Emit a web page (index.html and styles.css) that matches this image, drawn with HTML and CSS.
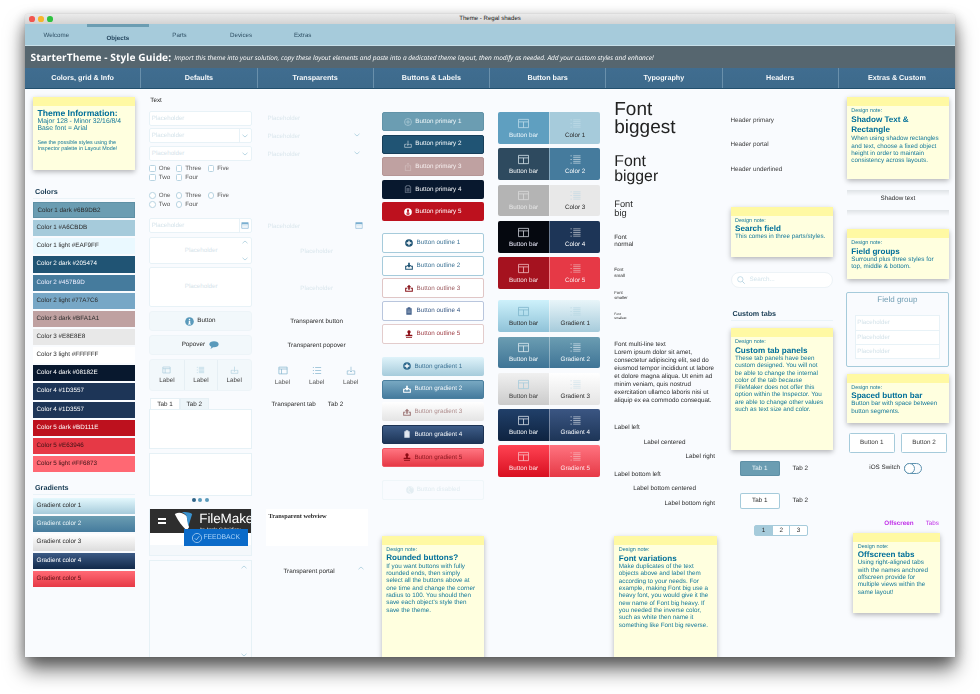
FILE: index.html
```html
<!DOCTYPE html>
<html lang="en">
<head>
<meta charset="utf-8">
<title>Theme - Regal shades</title>
<link rel="stylesheet" href="styles.css">
</head>
<body>
<svg class="sprite" xmlns="http://www.w3.org/2000/svg">
  <symbol id="i-plus-o" viewBox="0 0 24 24"><circle cx="12" cy="12" r="10.5" fill="none" stroke="currentColor" stroke-width="1.6"/><path d="M12 5v14M5 12h14" fill="none" stroke="currentColor" stroke-width="1.6"/></symbol>
  <symbol id="i-plus" viewBox="0 0 24 24"><circle cx="12" cy="12" r="11.5" fill="currentColor"/><path d="M12 5v14M5 12h14" fill="none" stroke="#fff" stroke-width="4"/></symbol>
  <symbol id="i-down-o" viewBox="0 0 24 24"><path d="M7 13H2v9h20v-9h-5M12 2v14M8 12l4 4 4-4" fill="none" stroke="currentColor" stroke-width="1.6"/></symbol>
  <symbol id="i-down" viewBox="0 0 24 24"><path d="M7 13H2v9h20v-9h-5" fill="none" stroke="currentColor" stroke-width="3.2"/><path d="M9.5 2h5v7H19l-7 8-7-8h4.500z" fill="currentColor"/></symbol>
  <symbol id="i-box-up" viewBox="0 0 24 24"><path d="M8 8H4v15h16V8h-4M12 1v13M9 4l3-3 3 3" fill="none" stroke="currentColor" stroke-width="1.6"/></symbol>
  <symbol id="i-up" viewBox="0 0 24 24"><path d="M7 13H2v9h20v-9h-5" fill="none" stroke="currentColor" stroke-width="3.2"/><path d="M9.500 17h5v-7H19l-7-8-7 8h4.500z" fill="currentColor"/></symbol>
  <symbol id="i-trash" viewBox="0 0 24 24"><path d="M7 2h10v3h3v18H4V5h3zM9 9v11M12 9v11M15 9v11" fill="none" stroke="currentColor" stroke-width="1.8"/></symbol>
  <symbol id="i-clip" viewBox="0 0 24 24"><path d="M8 1h8v3h4v19H4V4h4z" fill="currentColor"/><path d="M7 9h10M7 13h10M7 17h10" stroke="#fff" stroke-width="1.400" opacity=".7"/></symbol>
  <symbol id="i-stamp" viewBox="0 0 24 24"><path d="M12 1a5 5 0 0 1 3 9c-1 1-1 3 0 4h6a1 1 0 0 1 1 1v4H2v-4a1 1 0 0 1 1-1h6c1-1 1-3 0-4a5 5 0 0 1 3-9zM3 21h18v2H3z" fill="currentColor"/></symbol>
  <symbol id="i-stamp-c" viewBox="0 0 24 24"><circle cx="12" cy="12" r="11.500" fill="currentColor"/><path d="M12 4a4 4 0 0 1 2 7c-.5 1-.5 2 0 3h3v3H7v-3h3c.5-1 .5-2 0-3a4 4 0 0 1 2-7zM8 18h8v2H8z" fill="#bd111e"/></symbol>
  <symbol id="i-globe" viewBox="0 0 24 24"><circle cx="12" cy="12" r="11.500" fill="currentColor"/><path d="M6 4c4 2 5 5 2 7s0 6 3 7 3 3 2 5M15 2c-1 3 2 4 5 4" fill="none" stroke="#fff" stroke-width="1.800"/></symbol>
  <symbol id="i-table" viewBox="0 0 24 24"><path d="M1 3h22v18H1zM1 8.500h22M12 8.500V21" fill="none" stroke="currentColor" stroke-width="1.800"/></symbol>
  <symbol id="i-window" viewBox="0 0 24 24"><path d="M1 3h22v18H1zM1 8h22M8 8v13" fill="none" stroke="currentColor" stroke-width="1.800"/></symbol>
  <symbol id="i-list" viewBox="0 0 24 24"><path d="M7 4h16M7 12h16M7 20h16M1 4h3M1 12h3M1 20h3M7 8h16M7 16h16" fill="none" stroke="currentColor" stroke-width="1.500"/></symbol>
  <symbol id="i-list3" viewBox="0 0 24 24"><path d="M7 4h16M7 12h16M7 20h16M1 4h3M1 12h3M1 20h3" fill="none" stroke="currentColor" stroke-width="1.800"/></symbol>
  <symbol id="i-info" viewBox="0 0 24 24"><circle cx="12" cy="12" r="11.500" fill="currentColor"/><circle cx="12" cy="6.500" r="2" fill="#fff"/><path d="M10 10h4v8h2v2H8v-2h2z" fill="#fff"/></symbol>
  <symbol id="i-chat" viewBox="0 0 30 24"><path d="M15 1c8 0 14 4 14 9s-6 9-14 9c-1 0-2 0-3-.2C10 21 7 23 4 23c2-2 3-4 3-6-4-1.500-6-4-6-7 0-5 6-9 14-9z" fill="currentColor"/></symbol>
  <symbol id="i-chev-up" viewBox="0 0 12 8"><path d="M1 6.500 6 2l5 4.500" fill="none" stroke="currentColor" stroke-width="1.500"/></symbol>
  <symbol id="i-chev-down" viewBox="0 0 12 8"><path d="M1 1.500 6 6l5-4.500" fill="none" stroke="currentColor" stroke-width="1.500"/></symbol>
  <symbol id="i-cal" viewBox="0 0 24 24"><path d="M1 2h22v20H1z" fill="#fff" stroke="currentColor" stroke-width="2"/><path d="M1 2h22v6H1z" fill="currentColor"/><path d="M4 12h16M4 17h16" stroke="currentColor" stroke-width="1.500" opacity=".5"/></symbol>
  <symbol id="i-search" viewBox="0 0 24 24"><circle cx="10" cy="10" r="8" fill="none" stroke="currentColor" stroke-width="1.800"/><path d="m16 16 7 7" stroke="currentColor" stroke-width="2.400"/></symbol>
  <symbol id="i-check" viewBox="0 0 24 24"><circle cx="12" cy="12" r="11" fill="none" stroke="currentColor" stroke-width="1.500"/><path d="m6.500 12.500 4 4 7-9" fill="none" stroke="currentColor" stroke-width="1.500"/></symbol>
  <symbol id="i-fm" viewBox="0 0 24 24"><path d="M1 3c6-3 11-1 15 3l3 14-3 4C11 19 5 12 1 3z" fill="#fff"/><path d="M10 1c5-1 9 0 13 2l-5 16-2-13C15 4 13 2 10 1z" fill="#3a93d0"/></symbol>
</svg>

<div class="window">
  <div class="titlebar">
    <div class="lights"><span class="light red"></span><span class="light amber"></span><span class="light green"></span></div>
    <span class="title">Theme - Regal shades</span>
  </div>

  <nav class="topnav">
    <a>Welcome</a><a class="active">Objects</a><a>Parts</a><a>Devices</a><a>Extras</a>
  </nav>

  <header class="guide">
    <strong>StarterTheme - Style Guide:</strong>
    <em>Import this theme into your solution, copy these layout elements and paste into a dedicated theme layout, then modify as needed. Add your custom styles and enhance!</em>
  </header>

  <div class="colheads">
    <div>Colors, grid &amp; Info</div><div>Defaults</div><div>Transparents</div><div>Buttons &amp; Labels</div><div>Button bars</div><div>Typography</div><div>Headers</div><div>Extras &amp; Custom</div>
  </div>

  <main class="cols">
    <!-- Column 1 -->
    <section class="col">
      <div class="note note-theme">
        <h3 class="big">Theme Information:</h3>
        <p>Major 128 - Minor 32/16/8/4<br>Base font = Arial</p>
        <p class="gap">See the possible styles using the<br>Inspector palette in Layout Mode!</p>
      </div>
      <h4 class="sect colors-title">Colors</h4>
      <ul class="swatches">
        <li class="s1d">Color 1 dark #6B9DB2</li>
        <li class="s1">Color 1 #A6CBDB</li>
        <li class="s1l">Color 1 light #EAF9FF</li>
        <li class="s2d">Color 2 dark #205474</li>
        <li class="s2">Color 2 #457B9D</li>
        <li class="s2l">Color 2 light #77A7C6</li>
        <li class="s3d">Color 3 dark #BFA1A1</li>
        <li class="s3">Color 3 #E8E8E8</li>
        <li class="s3l">Color 3 light #FFFFFF</li>
        <li class="s4d">Color 4 dark #08182E</li>
        <li class="s4">Color 4 #1D3557</li>
        <li class="s4">Color 4 #1D3557</li>
        <li class="s5d">Color 5 dark #BD111E</li>
        <li class="s5">Color 5 #E63946</li>
        <li class="s5l">Color 5 light #FF6873</li>
      </ul>
      <h4 class="sect gradients-title">Gradients</h4>
      <ul class="swatches">
        <li class="g1">Gradient color 1</li>
        <li class="g2">Gradient color 2</li>
        <li class="g3">Gradient color 3</li>
        <li class="g4">Gradient color 4</li>
        <li class="g5">Gradient color 5</li>
      </ul>
    </section>

    <!-- Column 2 -->
    <section class="col">
      <div class="text-label">Text</div>
      <div class="field first">Placeholder</div>
      <div class="field drop">Placeholder<span class="cell"><svg class="chev"><use href="#i-chev-down"/></svg></span></div>
      <div class="field drop plain">Placeholder<span class="cell"><svg class="chev"><use href="#i-chev-down"/></svg></span></div>
      <div class="choices checks">
        <label><i></i>One</label><label><i></i>Three</label><label><i></i>Five</label>
        <label><i></i>Two</label><label><i></i>Four</label>
      </div>
      <div class="choices radios">
        <label><i></i>One</label><label><i></i>Three</label><label><i></i>Five</label>
        <label><i></i>Two</label><label><i></i>Four</label>
      </div>
      <div class="field drop date">Placeholder<span class="cell"><svg class="cal"><use href="#i-cal"/></svg></span></div>
      <div class="field scroll">Placeholder<span class="updown"><svg class="chev"><use href="#i-chev-up"/></svg><svg class="chev"><use href="#i-chev-down"/></svg></span></div>
      <div class="field area">Placeholder</div>
      <div class="soft first-soft"><svg class="ic-info"><use href="#i-info"/></svg>Button</div>
      <div class="soft second-soft">Popover<svg class="ic-chat"><use href="#i-chat"/></svg></div>
      <div class="softbar">
        <div><svg class="ic"><use href="#i-window"/></svg>Label</div>
        <div><svg class="ic"><use href="#i-list"/></svg>Label</div>
        <div><svg class="ic"><use href="#i-down-o"/></svg>Label</div>
      </div>
      <div class="tabset">
        <span class="tab on">Tab 1</span><span class="tab">Tab 2</span>
      </div>
      <div class="panel tab-panel"></div>
      <div class="panel slide-panel"></div>
      <div class="dots"><i class="dark"></i><i></i><i></i></div>
      <div class="webview">
        <div class="fm-banner">
          <span class="burger"></span>
          <svg class="fm-logo"><use href="#i-fm"/></svg>
          <span class="fm-name">FileMaker<small>An Apple Subsidiary</small></span>
        </div>
        <div class="feedback"><svg><use href="#i-check"/></svg>FEEDBACK</div>
        <div class="wv-white"></div>
      </div>
      <div class="portal">
        <svg class="chev"><use href="#i-chev-up"/></svg>
        <svg class="chev"><use href="#i-chev-down"/></svg>
      </div>
    </section>

    <!-- Column 3 -->
    <section class="col col-clear">
      <div class="clear c-first">Placeholder</div>
      <div class="clear c-drop">Placeholder<svg class="chev"><use href="#i-chev-down"/></svg></div>
      <div class="clear c-drop">Placeholder<svg class="chev"><use href="#i-chev-down"/></svg></div>
      <div class="clear c-date">Placeholder<svg class="cal"><use href="#i-cal"/></svg></div>
      <div class="clear center c-scroll">Placeholder</div>
      <div class="clear center c-area">Placeholder</div>
      <div class="ctext c-btn">Transparent button</div>
      <div class="ctext c-pop">Transparent popover</div>
      <div class="clearbar">
        <div><svg class="ic"><use href="#i-window"/></svg>Label</div>
        <div><svg class="ic"><use href="#i-list3"/></svg>Label</div>
        <div><svg class="ic"><use href="#i-down-o"/></svg>Label</div>
      </div>
      <div class="cleartabs"><span>Transparent tab</span><span>Tab 2</span></div>
      <div class="clearweb">Transparent webview</div>
      <div class="clearportal">
        <span>Transparent portal</span>
        <svg class="chev"><use href="#i-chev-up"/></svg>
      </div>
    </section>

    <!-- Column 4 -->
    <section class="col col-btns">
      <div class="btngroup primary">
        <a class="btn p1"><svg><use href="#i-plus-o"/></svg>Button primary 1</a>
        <a class="btn p2"><svg><use href="#i-down-o"/></svg>Button primary 2</a>
        <a class="btn p3"><svg><use href="#i-box-up"/></svg>Button primary 3</a>
        <a class="btn p4"><svg><use href="#i-trash"/></svg>Button primary 4</a>
        <a class="btn p5"><svg><use href="#i-stamp-c"/></svg>Button primary 5</a>
      </div>
      <div class="btngroup outline">
        <a class="btn o1"><svg><use href="#i-plus"/></svg>Button outline 1</a>
        <a class="btn o2"><svg><use href="#i-down"/></svg>Button outline 2</a>
        <a class="btn o3"><svg><use href="#i-up"/></svg>Button outline 3</a>
        <a class="btn o4"><svg><use href="#i-clip"/></svg>Button outline 4</a>
        <a class="btn o5"><svg><use href="#i-stamp"/></svg>Button outline 5</a>
      </div>
      <div class="btngroup gradient">
        <a class="btn gr1"><svg><use href="#i-plus"/></svg>Button gradient 1</a>
        <a class="btn gr2"><svg><use href="#i-down"/></svg>Button gradient 2</a>
        <a class="btn gr3"><svg><use href="#i-up"/></svg>Button gradient 3</a>
        <a class="btn gr4"><svg><use href="#i-clip"/></svg>Button gradient 4</a>
        <a class="btn gr5"><svg><use href="#i-stamp"/></svg>Button gradient 5</a>
      </div>
      <a class="btn disabled"><svg><use href="#i-globe"/></svg>Button disabled</a>
      <div class="note note-rounded">
        <span class="dn">Design note:</span>
        <h3>Rounded buttons?</h3>
        <p>If you want buttons with fully<br>rounded ends, then simply<br>select all the buttons above at<br>one time and change the corner<br>radius to 100. You should then<br>save each object's style then<br>save the theme.</p>
      </div>
    </section>

    <!-- Column 5 -->
    <section class="col col-bars">
      <div class="bars">
        <div class="bar b1"><div><svg><use href="#i-table"/></svg>Button bar</div><div><svg><use href="#i-list"/></svg>Color 1</div></div>
        <div class="bar b2"><div><svg><use href="#i-table"/></svg>Button bar</div><div><svg><use href="#i-list"/></svg>Color 2</div></div>
        <div class="bar b3"><div><svg><use href="#i-table"/></svg>Button bar</div><div><svg><use href="#i-list"/></svg>Color 3</div></div>
        <div class="bar b4"><div><svg><use href="#i-table"/></svg>Button bar</div><div><svg><use href="#i-list"/></svg>Color 4</div></div>
        <div class="bar b5"><div><svg><use href="#i-table"/></svg>Button bar</div><div><svg><use href="#i-list"/></svg>Color 5</div></div>
      </div>
      <div class="bars second">
        <div class="bar c1"><div><svg><use href="#i-table"/></svg>Button bar</div><div><svg><use href="#i-list"/></svg>Gradient 1</div></div>
        <div class="bar c2"><div><svg><use href="#i-table"/></svg>Button bar</div><div><svg><use href="#i-list"/></svg>Gradient 2</div></div>
        <div class="bar c3"><div><svg><use href="#i-table"/></svg>Button bar</div><div><svg><use href="#i-list"/></svg>Gradient 3</div></div>
        <div class="bar c4"><div><svg><use href="#i-table"/></svg>Button bar</div><div><svg><use href="#i-list"/></svg>Gradient 4</div></div>
        <div class="bar c5"><div><svg><use href="#i-table"/></svg>Button bar</div><div><svg><use href="#i-list"/></svg>Gradient 5</div></div>
      </div>
    </section>

    <!-- Column 6 -->
    <section class="col col-type">
      <div class="t-biggest">Font<br>biggest</div>
      <div class="t-bigger">Font<br>bigger</div>
      <div class="t-big">Font<br>big</div>
      <div class="t-normal">Font<br>normal</div>
      <div class="t-small">Font<br>small</div>
      <div class="t-smaller">Font<br>smaller</div>
      <div class="t-smallest">Font<br>smallest</div>
      <p class="t-multi">Font multi-line text<br>Lorem ipsum dolor sit amet,<br>consectetur adipiscing elit, sed do<br>eiusmod tempor incididunt ut labore<br>et dolore magna aliqua. Ut enim ad<br>minim veniam, quis nostrud<br>exercitation ullamco laboris nisi ut<br>aliquip ex ea commodo consequat.</p>
      <div class="labels">
        <span class="l-left">Label left</span>
        <span class="l-center">Label centered</span>
        <span class="l-right">Label right</span>
        <span class="l-left l-bottom">Label bottom left</span>
        <span class="l-center">Label bottom centered</span>
        <span class="l-right">Label bottom right</span>
      </div>
      <div class="note note-font">
        <span class="dn">Design note:</span>
        <h3>Font variations</h3>
        <p>Make duplicates of the text<br>objects above and label them<br>according to your needs. For<br>example, making Font big use a<br>heavy font, you would give it the<br>new name of Font big heavy. If<br>you needed the inverse color,<br>such as white then name it<br>something like Font big reverse.</p>
      </div>
    </section>

    <!-- Column 7 -->
    <section class="col col-headers">
      <div class="hdr h-primary">Header primary</div>
      <div class="hdr h-portal">Header portal</div>
      <div class="hdr h-under">Header underlined</div>
      <div class="note note-search">
        <span class="dn">Design note:</span>
        <h3>Search field</h3>
        <p>This comes in three parts/styles.</p>
      </div>
      <div class="search"><svg><use href="#i-search"/></svg><span>Search...</span></div>
      <h4 class="sect custom-title">Custom tabs</h4>
      <div class="note note-tabs">
        <span class="dn">Design note:</span>
        <h3>Custom tab panels</h3>
        <p>These tab panels have been<br>custom designed. You will not<br>be able to change the internal<br>color of the tab because<br>FileMaker does not offer this<br>option within the Inspector. You<br>are able to change other values<br>such as text size and color.</p>
      </div>
      <div class="ctabs t-one"><span class="ctab fill">Tab 1</span><span class="ctab">Tab 2</span></div>
      <div class="ctabs t-two"><span class="ctab line">Tab 1</span><span class="ctab">Tab 2</span></div>
      <div class="pager"><span class="on">1</span><span>2</span><span>3</span></div>
    </section>

    <!-- Column 8 -->
    <section class="col col-extra">
      <div class="note note-shadow">
        <span class="dn">Design note:</span>
        <h3>Shadow Text &amp; Rectangle</h3>
        <p>When using shadow rectangles<br>and text, choose a fixed object<br>height in order to maintain<br>consistency across layouts.</p>
      </div>
      <div class="shadow-text">Shadow text</div>
      <div class="note note-groups">
        <span class="dn">Design note:</span>
        <h3>Field groups</h3>
        <p>Surround plus three styles for<br>top, middle &amp; bottom.</p>
      </div>
      <div class="fieldgroup">
        <div class="fg-title">Field group</div>
        <div class="fg-fields"><div>Placeholder</div><div>Placeholder</div><div>Placeholder</div></div>
      </div>
      <div class="note note-spaced">
        <span class="dn">Design note:</span>
        <h3>Spaced button bar</h3>
        <p>Button bar with space between<br>button segments.</p>
      </div>
      <div class="spaced"><span>Button 1</span><span>Button 2</span></div>
      <div class="ios">iOS Switch<span class="switch"><i></i></span></div>
      <div class="offscreen"><b>Offscreen</b><span>Tabs</span></div>
      <div class="note note-off">
        <span class="dn">Design note:</span>
        <h3>Offscreen tabs</h3>
        <p>Using right-aligned tabs<br>with the names anchored<br>offscreen provide for<br>multiple views within the<br>same layout!</p>
      </div>
    </section>
  </main>
</div>
</body>
</html>
```

FILE: styles.css
```css
* { box-sizing: border-box; }
html, body { margin: 0; height: 100%; overflow: hidden; background: #fff; }
body {
  padding: 14px 25px 0;
  font-family: "Liberation Sans", Arial, sans-serif;
  font-size: 6.3px;
  line-height: 7.3px;
  color: #2b2b2b;
  text-rendering: geometricPrecision;
}
.sprite { display: none; }
h3, h4, p, ul { margin: 0; padding: 0; list-style: none; }

.window {
  height: 643px;
  overflow: hidden;
  background: #f9fbfe;
  border-radius: 3px 3px 0 0;
  box-shadow: 0 0 1px rgba(0,0,0,.25), 0 13px 20px rgba(0,0,0,.55), 0 4px 14px rgba(0,0,0,.3);
  filter: blur(.3px);
}

/* title bar */
.titlebar {
  height: 10px;
  display: flex;
  align-items: center;
  justify-content: center;
  background: linear-gradient(#ebebeb, #d3d3d3);
  position: relative;
  font-size: 6.100px;
  color: #222;
}
.lights { display: flex; gap: 3.3px; position: absolute; left: 4px; top: 2px; }
.light { width: 5.700px; height: 5.700px; border-radius: 50%; }
.red { background: #f2564f; }
.amber { background: #f7b52c; }
.green { background: #2fc240; }

/* top nav */
.topnav {
  height: 22px;
  display: flex;
  background: #a6cbdb;
  border-bottom: 1px solid #c8e0ea;
  padding-left: .5px;
}
.topnav a {
  width: 61.600px;
  text-align: center;
  padding-top: 8px;
  color: #2f5065;
  font-size: 6.200px;
}
.topnav .active {
  border-top: 3px solid #6b9db2;
  padding-top: 8px;
  font-weight: bold;
  color: #264860;
}

/* guide bar */
.guide {
  height: 22px;
  display: flex;
  align-items: center;
  gap: 3px;
  padding-left: 5.500px;
  background: #56666f;
  color: #fff;
  white-space: nowrap;
}
.guide strong { font: bold 10.100px "Open Sans", sans-serif; letter-spacing: .1px; }
.guide em { font: italic 6.500px "Open Sans", sans-serif; padding-top: 1px; }

/* column headers */
.colheads {
  height: 21px;
  display: grid;
  grid-template-columns: repeat(8, 1fr);
  background: linear-gradient(#406d90, #3d6a8b);
  border-bottom: 1px solid #22506e;
}
.colheads div {
  display: flex;
  align-items: center;
  justify-content: center;
  color: #f6f9fb;
  font-weight: bold;
  font-size: 7.200px;
  border-right: 1px solid #6a90ab;
}
.colheads div:last-child { border-right: 0; }

/* columns */
.cols { display: grid; grid-template-columns: repeat(8, 1fr); }
.col {
  padding: 8px 6px 0 8px;
  min-width: 0;
  display: flex;
  flex-direction: column;
}

/* notes */
.note {
  flex: none;
  background: #ffffdf;
  border-top: 9px solid #fff9a3;
  padding: 2px 4.500px 0;
  color: #14789a;
  box-shadow: 0 2px 5px rgba(0,0,0,.28);
  font-size: 6.300px;
  line-height: 7.300px;
  white-space: nowrap;
}
.note .dn { display: block; font-size: 5.500px; line-height: 6.500px; }
.note h3 { font-size: 8.100px; line-height: 9.400px; color: #006f99; }
.note-theme { height: 73px; }
.note-theme h3.big { font-size: 8.600px; line-height: 10px; }
.note-theme p { font-size: 6.800px; line-height: 7.300px; }
.note-theme p.gap { margin-top: 7px; line-height: 6.600px; font-size: 5.400px; }
.note-rounded { margin-top: 36px; height: 130px; }
.note-font { margin-top: 29px; height: 130px; }
.note-search { height: 50px; margin-top: 34px; }
.note-tabs { height: 121.500px; margin-top: 7px; }
.note-shadow { height: 81.500px; white-space: normal; }
.note-shadow h3 { line-height: 10.400px; }
.note-groups { height: 49.500px; margin-top: 13px; }
.note-spaced { height: 49px; margin-top: 7px; }
.note-off { height: 80px; width: 87px; margin: 6px 0 0 6.500px; }

/* section titles */
.sect {
  height: 13px;
  font-size: 7.200px;
  line-height: 11px;
  color: #163a52;
  border-bottom: 1px solid #eaf3f8;
  padding-left: 2px;
}
.colors-title { margin-top: 16px; margin-bottom: 3px; }
.gradients-title { margin-top: 10px; margin-bottom: 3px; }
.custom-title { margin-top: 20px; }

/* swatches */
.swatches { display: flex; flex-direction: column; gap: 2px; }
.swatches li {
  height: 16.150px;
  line-height: 15px;
  padding-left: 3.500px;
  font-size: 6.300px;
  color: #2b2b2b;
}
.s1d { background: #6b9db2; border: 1px solid #5e90a5; }
.s1  { background: #a6cbdb; }
.s1l { background: #eaf9ff; }
.swatches .s2d { background: #205474; color: #fff; }
.swatches .s2  { background: #457b9d; color: #eef; }
.s2l { background: #77a7c6; }
.s3d { background: #bfa1a1; }
.s3  { background: #e8e8e8; }
.s3l { background: #fff; }
.swatches .s4d { background: #08182e; color: #fff; }
.swatches .s4  { background: #1d3557; color: #fff; }
.swatches .s5d { background: #bd111e; color: #fff; }
.swatches .s5  { background: #e63946; color: #3a1114; }
.swatches .s5l { background: #ff6873; color: #3a1114; }
.g1 { background: linear-gradient(#e4f8fd, #a6cbdb); }
.swatches .g2 { background: linear-gradient(#6b9db2, #457b9d); color: #e6f2f7; }
.g3 { background: linear-gradient(#fff, #dcdcdc); }
.swatches .g4 { background: linear-gradient(#3b5a85, #12294a); color: #fff; }
.swatches .g5 { background: linear-gradient(#ff6a75, #e63946); color: #5a1014; }

/* column 2 */
.text-label { height: 7px; line-height: 7px; padding-left: 1px; }
.field {
  height: 15px;
  flex: none;
  background: #fff;
  border: 1px solid #e8f2f7;
  border-radius: 2px;
  color: #d5e3ea;
  font-size: 6.200px;
  line-height: 13px;
  padding-left: 1.500px;
  display: flex;
  justify-content: space-between;
}
.field.first { margin-top: 7px; }
.drop { margin-top: 2px; }
.drop.plain { margin-top: 3px; }
.cell {
  width: 12px;
  display: flex;
  align-items: center;
  justify-content: center;
  border-left: 1px solid #e8f2f7;
}
.plain .cell { border-left: 0; }
.chev { width: 6px; height: 4px; color: #a6cbdb; display: block; }
.cal { width: 8px; height: 7px; color: #7aaed0; display: block; }
.field.date { margin-top: 9px; }
.field.scroll {
  height: 27px;
  margin-top: 4px;
  justify-content: center;
  position: relative;
  line-height: 25px;
}
.updown {
  position: absolute;
  right: 3px; top: 2px; bottom: 2px;
  display: flex;
  flex-direction: column;
  justify-content: space-between;
}
.field.area { height: 40px; margin-top: 3px; justify-content: center; line-height: 38px; }

.choices {
  display: grid;
  grid-template-columns: 26.500px 32px 30px;
  grid-auto-rows: 9px;
  color: #555;
  font-size: 6.200px;
  line-height: 9px;
}
.choices label { display: flex; align-items: center; gap: 3px; }
.choices i { width: 6.500px; height: 6.500px; background: #fff; border: 1px solid #b8d4e2; flex: none; }
.checks { margin-top: 3px; }
.checks i { border-radius: 1.500px; }
.radios { margin-top: 9px; }
.radios i { border-radius: 50%; }

.soft {
  height: 20px;
  flex: none;
  display: flex;
  align-items: center;
  justify-content: center;
  gap: 3px;
  background: #f2f8fb;
  border: 1px solid #edf4f8;
  border-radius: 3px;
}
.first-soft { margin-top: 4px; }
.second-soft { margin-top: 4px; gap: 4px; }
.ic-info { width: 9px; height: 9px; color: #5a9abb; }
.ic-chat { width: 10px; height: 8px; color: #5a9abb; }
.softbar {
  margin-top: 3.500px;
  height: 32.500px;
  flex: none;
  display: grid;
  grid-template-columns: repeat(3, 1fr);
  background: #f2f8fb;
  border: 1px solid #edf4f8;
  border-radius: 3px;
}
.softbar div, .clearbar div {
  display: flex;
  flex-direction: column;
  align-items: center;
  justify-content: center;
  gap: 3px;
  color: #444;
}
.softbar div + div { border-left: 1px solid #e6eff4; }
.ic { width: 9px; height: 8px; color: #a3c8da; }
.tabset { margin-top: 7px; height: 11px; display: flex; padding-left: 1px; flex: none; }
.tab {
  width: 29px;
  text-align: center;
  line-height: 11px;
  background: #edf5f9;
  border: 1px solid #e6f0f5;
  border-bottom: 0;
}
.tab.on { width: 29.500px; background: #fff; }
.panel { background: #fff; border: 1px solid #e6f1f6; flex: none; }
.tab-panel { height: 40px; }
.slide-panel { height: 43px; margin-top: 4px; }
.dots { height: 4px; margin-top: 2px; display: flex; justify-content: center; gap: 2.500px; flex: none; }
.dots i { width: 4px; height: 4px; border-radius: 50%; background: #5a9abb; }
.dots .dark { background: #2f6488; }

.webview {
  margin-top: 7px;
  height: 47px;
  flex: none;
  position: relative;
  background: #f4f8fb;
  border: 1px solid #e8f2f7;
  border-top: 0;
}
.fm-banner {
  height: 24px;
  background: #2e2e2e;
  color: #fff;
  display: flex;
  overflow: hidden;
  white-space: nowrap;
}
.burger {
  width: 8px; height: 6px;
  margin: 9px 0 0 8px;
  border-top: 2px solid #fff;
  border-bottom: 2px solid #fff;
  flex: none;
}
.fm-logo { width: 19px; height: 24px; margin-left: 8px; flex: none; }
.fm-name { font-size: 13.500px; line-height: 20px; margin-left: 6px; letter-spacing: -.1px; }
.fm-name small { display: block; font-size: 4.800px; line-height: 3px; }
.wv-white { height: 12px; background: #fff; }
.feedback {
  position: absolute;
  left: 34px; top: 20px;
  width: 64px; height: 17px;
  background: #0b6bc9;
  color: #a9d2f7;
  font-size: 6.800px;
  display: flex;
  align-items: center;
  justify-content: center;
  gap: 1px;
}
.feedback svg { width: 10px; height: 10px; color: #d8ecfb; }
.portal {
  margin-top: 4px;
  height: 98px;
  flex: none;
  border: 1px solid #e6f1f6;
  padding: 4px 4px 0;
  display: flex;
  flex-direction: column;
  align-items: flex-end;
  justify-content: space-between;
}

/* column 3 */
.col-clear { padding-top: 22px; }
.clear {
  height: 15px;
  flex: none;
  color: #dbe7ed;
  line-height: 15px;
  padding-left: 2px;
  font-size: 6.200px;
  display: flex;
  justify-content: space-between;
  align-items: flex-start;
}
.clear .chev { margin: 4px 8px 0 0; }
.clear .cal { margin: 3px 5px 0 0; }
.c-drop { margin-top: 3px; }
.c-date { margin-top: 57px; }
.clear.center { justify-content: center; padding: 0; }
.c-scroll { height: 27px; margin-top: 4px; line-height: 27px; }
.c-area { height: 40px; margin-top: 3px; line-height: 41px; }
.ctext { height: 20px; flex: none; text-align: center; line-height: 20px; color: #2b2b2b; }
.c-btn { margin-top: 4px; }
.c-pop { margin-top: 4px; }
.clearbar { margin-top: 3.500px; height: 32.500px; flex: none; display: grid; grid-template-columns: repeat(3, 1fr); }
.clearbar div { gap: 4px; color: #555; }
.clearbar .ic { width: 10px; height: 9px; color: #7eb0cb; }
.cleartabs { margin-top: 8px; height: 9px; flex: none; display: flex; gap: 12px; padding-left: 6px; line-height: 9px; }
.clearweb {
  margin-top: 100px;
  height: 37px;
  flex: none;
  background: #fff;
  padding: 4px 3px;
  font: bold 6.300px/8px "Liberation Serif", serif;
  color: #2b2b2b;
}
.clearportal {
  margin-top: 22px;
  display: flex;
  justify-content: space-between;
  padding: 0 3.500px 0 18px;
  color: #2b2b2b;
  line-height: 7px;
}
.clearportal .chev { margin-top: -2px; }

/* column 4 buttons */
.col-btns { padding-top: 23px; }
.btngroup { display: flex; flex-direction: column; flex: none; }
.btn {
  flex: none;
  display: flex;
  align-items: center;
  justify-content: center;
  gap: 3px;
  height: 19px;
  border-radius: 2px;
  white-space: nowrap;
}
.btn svg { width: 8px; height: 8px; flex: none; }
.primary { gap: 3.600px; }
.outline { gap: 2.700px; margin-top: 11.600px; }
.gradient { gap: 3.700px; margin-top: 13.200px; }
.outline .btn { height: 20px; background: #fff; border: 1px solid #a6cbdb; }
.p1 { background: #6b9db2; border: 1px solid #6293a8; color: #eef6f9; }
.p1 svg { color: #c5dbe5; }
.p2 { background: #205474; border: 1px solid #173f5a; color: #f6fafc; }
.p3 { background: #bfa1a1; border: 1px solid #b59696; color: #f6eeee; }
.p3 svg { color: #d9c8c8; }
.p4 { background: #08182e; color: #f6f8fb; }
.p4 svg { color: #8d99a8; }
.p5 { background: #bd111e; color: #fff; }
.o1, .o2 { color: #3f7496; }
.o1 svg, .o2 svg { color: #205474; }
.outline .o3 { color: #9c5c60; border-color: #e0c6c6; }
.o3 svg { color: #8c1a20; }
.outline .o4 { color: #3a5a85; border-color: #b9c6dd; }
.o4 svg { color: #46638c; }
.outline .o5 { color: #a04048; border-color: #e3cccc; }
.o5 svg { color: #8c0c14; }
.gr1 { background: linear-gradient(#dff3fa, #a6cbdb); color: #3f7496; }
.gr1 svg { color: #2f6a8e; }
.gr2 { background: linear-gradient(#78a8c2, #457b9d); border: 1px solid #4a7f9e; color: #f2f7fa; }
.gr2 svg { color: #fff; }
.gr3 { background: linear-gradient(#fff, #e4e4e4); color: #b08f8f; }
.gr3 svg { color: #a07a7a; }
.gr4 { background: linear-gradient(#3e5d89, #1d3557); border: 1px solid #1c3354; color: #f2f5f9; }
.gr4 svg { color: #dbe3ec; }
.gr5 { background: linear-gradient(#ff7480, #e63946); border: 1px solid #ef5662; color: #8f1a22; }
.gr5 svg { color: #8c0c14; }
.btn.disabled {
  height: 20px;
  margin-top: 13.200px;
  border: 1px solid #eff6f9;
  color: #e0ebf0;
}
.disabled svg { color: #e3edf2; }

/* column 5 bars */
.col-bars { padding-top: 23px; }
.bars { display: flex; flex-direction: column; gap: 4.600px; flex: none; }
.bars.second { margin-top: 11.500px; }
.bar {
  height: 31.700px;
  flex: none;
  display: grid;
  grid-template-columns: 1fr 1fr;
  border-radius: 2px;
  overflow: hidden;
}
.bar > div {
  display: flex;
  flex-direction: column;
  align-items: center;
  justify-content: center;
  gap: 3px;
  padding-top: 1px;
}
.bar > div + div { border-left: 1px solid rgba(255,255,255,.35); }
.bar svg { width: 11px; height: 11px; }
.b1 > div:first-child { background: #5f9fc0; color: #eaf5fa; }
.b1 > div:first-child svg { color: #b8d8e8; }
.b1 > div + div { background: #a6cbdb; color: #2b2b2b; }
.b1 > div + div svg { color: #c0dce8; }
.b2 > div:first-child { background: #2e4a5f; color: #f4f7f9; }
.b2 > div + div { background: #457b9d; color: #f8fafc; }
.b2 svg { color: #cfdde6; }
.b3 > div:first-child { background: #b4b4b4; color: #e6e6e6; }
.b3 > div:first-child svg { color: #d8d8d8; }
.b3 > div + div { background: #e8e8e8; color: #2b2b2b; }
.b3 > div + div svg { color: #c0d8e4; }
.b4 > div:first-child { background: #05080f; color: #eef; }
.b4 > div + div { background: #1d3557; color: #fff; }
.b4 svg { color: #c8ccd4; }
.b5 > div:first-child { background: #a5121f; color: #f6e2e4; }
.b5 > div + div { background: #e63946; color: #fbe6e8; }
.b5 svg { color: #eeb4b8; }
.c1 > div:first-child { background: linear-gradient(#cdf1fb, #8fc2d8); color: #2b2b2b; }
.c1 > div:first-child svg { color: #7fb6cc; }
.c1 > div + div { background: linear-gradient(#e8f5f9, #a6cbdb); color: #2b2b2b; }
.c1 > div + div svg { color: #b6d6e2; }
.c2 > div { background: linear-gradient(#6b9db2, #3f7496); color: #f6fafc; }
.c2 svg { color: #d6e5ed; }
.c3 > div:first-child { background: linear-gradient(#f0f0f0, #cbcbcb); color: #3a3a3a; }
.c3 > div:first-child svg { color: #a6cbdb; }
.c3 > div + div { background: linear-gradient(#fff, #e4e4e4); color: #2b2b2b; }
.c3 > div + div svg { color: #cfe2ea; }
.c4 > div:first-child { background: linear-gradient(#21406a, #0e2340); color: #f4f7fa; }
.c4 > div + div { background: linear-gradient(#3b5683, #1d3557); color: #f6f8fb; }
.c4 svg { color: #d0d8e2; }
.c5 > div:first-child { background: linear-gradient(#ff4353, #d80f20); color: #fde6e8; }
.c5 > div + div { background: linear-gradient(#ff7480, #e63946); color: #fde6e8; }
.c5 svg { color: #f8b8bd; }

/* column 6 type */
.col-type { color: #2b2b2b; padding-top: 11.500px; }
.t-biggest { font-size: 19px; line-height: 18px; color: #222; }
.t-bigger { font-size: 15.800px; line-height: 15px; margin-top: 17px; color: #222; }
.t-big { font-size: 9.300px; line-height: 9px; margin-top: 16px; }
.t-normal { font-size: 6.300px; line-height: 7.400px; margin-top: 16px; }
.t-small { font-size: 4.600px; line-height: 5.700px; margin-top: 19px; }
.t-smaller { font-size: 4.200px; line-height: 5px; margin-top: 11px; }
.t-smallest { font-size: 3.300px; line-height: 4.300px; margin-top: 12px; }
.t-multi { margin: 21px 0 0; font-size: 6.300px; line-height: 8px; white-space: nowrap; }
.labels { margin-top: 19px; padding-right: 1.500px; display: flex; flex-direction: column; gap: 6.900px; }
.labels span { line-height: 7.600px; }
.l-center { text-align: center; }
.l-right { text-align: right; }
.l-bottom { margin-top: 2.900px; }

/* column 7 */
.col-headers { padding-top: 28px; }
.hdr { height: 7px; line-height: 7px; color: #3a3a3a; flex: none; }
.h-portal { margin-top: 17px; }
.h-under { margin-top: 17.500px; }
.search {
  height: 16px;
  margin-top: 15.500px;
  flex: none;
  display: flex;
  align-items: center;
  gap: 5px;
  background: #fff;
  border: 1px solid #edf3f7;
  border-radius: 8px;
  padding-left: 5px;
  color: #d5e5ec;
}
.search svg { width: 8px; height: 8px; color: #a3c8da; }
.ctabs { display: flex; align-items: center; flex: none; padding-left: 9px; gap: 0; }
.t-one { margin-top: 11px; }
.t-two { margin-top: 17.500px; }
.ctab { width: 40.500px; height: 15px; line-height: 15px; text-align: center; border-radius: 2px; color: #2b2b2b; }
.ctab + .ctab { margin-left: 0; }
.fill { background: #6b9db2; color: #eef6f9; box-shadow: inset 0 0 0 1px #5f90a6; }
.line { background: #fff; box-shadow: inset 0 0 0 1px #a6cbdb; height: 15.500px; }
.pager {
  margin: 16.500px 0 0 23.500px;
  width: 53.500px;
  height: 11px;
  flex: none;
  display: grid;
  grid-template-columns: repeat(3, 1fr);
  border: 1px solid #a6cbdb;
  border-radius: 2px;
  background: #fff;
  text-align: center;
  line-height: 9px;
}
.pager span + span { border-left: 1px solid #a6cbdb; }
.pager .on { background: #a6cbdb; }

/* column 8 */
.shadow-text {
  margin-top: 11.500px;
  height: 26px;
  flex: none;
  position: relative;
  text-align: center;
  line-height: 17px;
  background:
    linear-gradient(#dfe3e6, #f9fbfe) top / 100% 6px no-repeat,
    linear-gradient(#dfe3e6, #f9fbfe) 0 20px / 100% 6px no-repeat;
}
.fieldgroup {
  margin-top: 13px;
  margin-left: -1px;
  height: 75px;
  flex: none;
  border: 1px solid #a6cbdb;
  border-radius: 2px;
  padding: 2px 8px 0;
}
.fg-title { color: #6f9cb2; font-size: 8px; line-height: 10px; text-align: center; }
.fg-fields { margin-top: 10px; background: #fff; border: 1px solid #e8f2f7; color: #d5e3ea; }
.fg-fields div { height: 14.300px; line-height: 13px; padding-left: 1.500px; font-size: 6.200px; }
.fg-fields div + div { border-top: 1px solid #e8f2f7; }
.spaced { margin-top: 10.500px; display: flex; justify-content: space-between; padding: 0 2px; flex: none; }
.spaced span {
  width: 46px;
  height: 20px;
  line-height: 18px;
  text-align: center;
  background: #fff;
  border: 1px solid #a6cbdb;
  border-radius: 1.500px;
  color: #3a3a3a;
}
.ios {
  margin-top: 9.500px;
  height: 11px;
  flex: none;
  display: flex;
  align-items: center;
  padding-left: 22.500px;
  gap: 3.500px;
}
.switch {
  width: 18.500px;
  height: 11px;
  border: 1px solid #5f93b0;
  border-radius: 6px;
  display: block;
}
.switch i {
  display: block;
  width: 11px;
  height: 11px;
  margin: -1px 0 0 -1px;
  border: 1px solid #5f93b0;
  border-radius: 50%;
  background: #fff;
}
.offscreen {
  margin-top: 46px;
  height: 7px;
  flex: none;
  display: flex;
  line-height: 7px;
  color: #c02fe8;
  padding-left: 37.500px;
  gap: 12px;
}
```
